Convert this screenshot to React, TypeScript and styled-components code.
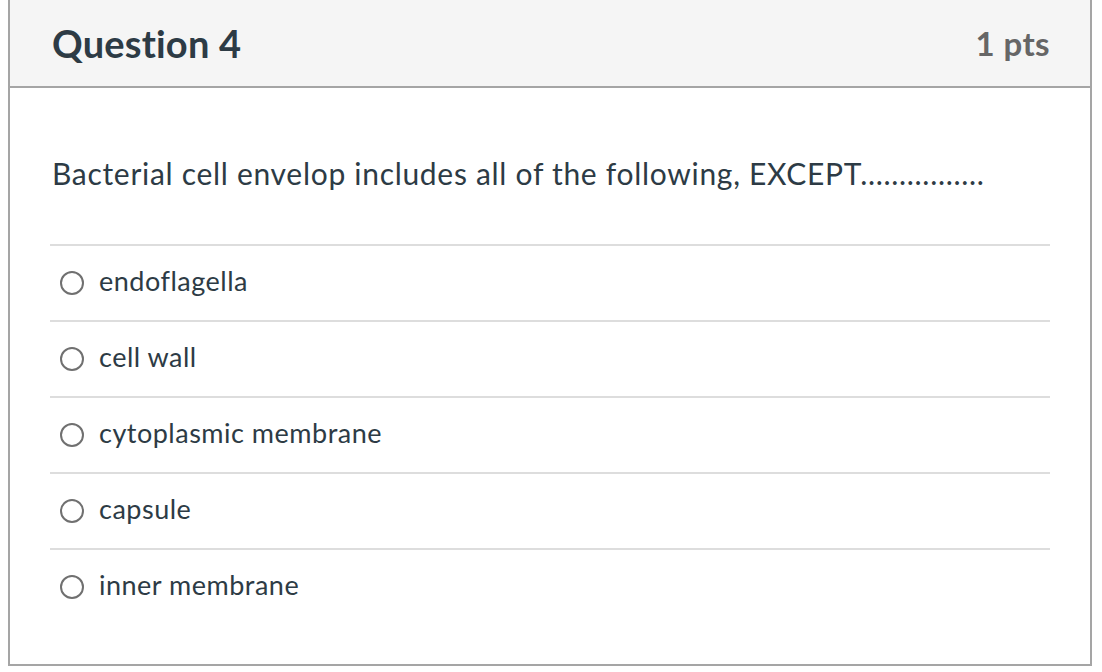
import React from 'react';
import styled, { createGlobalStyle } from 'styled-components';

const GlobalStyle = createGlobalStyle`
  html, body {
    margin: 0;
    padding: 0;
    background: #ffffff;
  }
  body {
    font-family: Lato, "Open Sans", sans-serif;
    color: #2d3b45;
  }
`;

const Card = styled.div`
  margin: 0 10px 0 8px;
  border: 2px solid #a5a5a5;
  border-top: none;
  background: #ffffff;
`;

const Header = styled.div`
  height: 88px;
  box-sizing: border-box;
  padding: 0 40px 0 42px;
  background: #f5f5f5;
  border-bottom: 2px solid #a5a5a5;
  display: flex;
  align-items: center;
  justify-content: space-between;
`;

const Title = styled.h2`
  margin: 0;
  font-size: 38px;
  font-weight: 700;
  color: #2d3b45;
  letter-spacing: 0.2px;
`;

const Points = styled.div`
  font-size: 33px;
  font-weight: 700;
  color: #666666;
  letter-spacing: 0.4px;
`;

const Body = styled.div`
  padding: 64px 40px 40px 40px;
`;

const QuestionText = styled.p`
  margin: 0 0 50px 2px;
  font-size: 30px;
  line-height: 42px;
  letter-spacing: 0.7px;
  color: #2d3b45;
`;

const AnswerList = styled.div`
  display: flex;
  flex-direction: column;
`;

const AnswerRow = styled.label`
  height: 76px;
  box-sizing: border-box;
  border-top: 2px solid #dddddd;
  display: flex;
  align-items: center;
  padding-left: 10px;
  gap: 15px;
  cursor: pointer;
`;

const Radio = styled.span`
  width: 24px;
  height: 24px;
  box-sizing: border-box;
  border-radius: 50%;
  border: 2px solid #707070;
  flex-shrink: 0;
`;

const AnswerLabel = styled.span`
  font-size: 27px;
  color: #2d3b45;
  line-height: 1;
  letter-spacing: 0.5px;
  padding-bottom: 5px;
`;

const answers = [
  'endoflagella',
  'cell wall',
  'cytoplasmic membrane',
  'capsule',
  'inner membrane',
];

export default function App() {
  return (
    <>
      <GlobalStyle />
      <Card>
        <Header>
          <Title>Question 4</Title>
          <Points>1 pts</Points>
        </Header>
        <Body>
          <QuestionText>
            Bacterial cell envelop includes all of the following, EXCEPT................
          </QuestionText>
          <AnswerList>
            {answers.map((a) => (
              <AnswerRow key={a}>
                <Radio />
                <AnswerLabel>{a}</AnswerLabel>
              </AnswerRow>
            ))}
          </AnswerList>
        </Body>
      </Card>
    </>
  );
}
